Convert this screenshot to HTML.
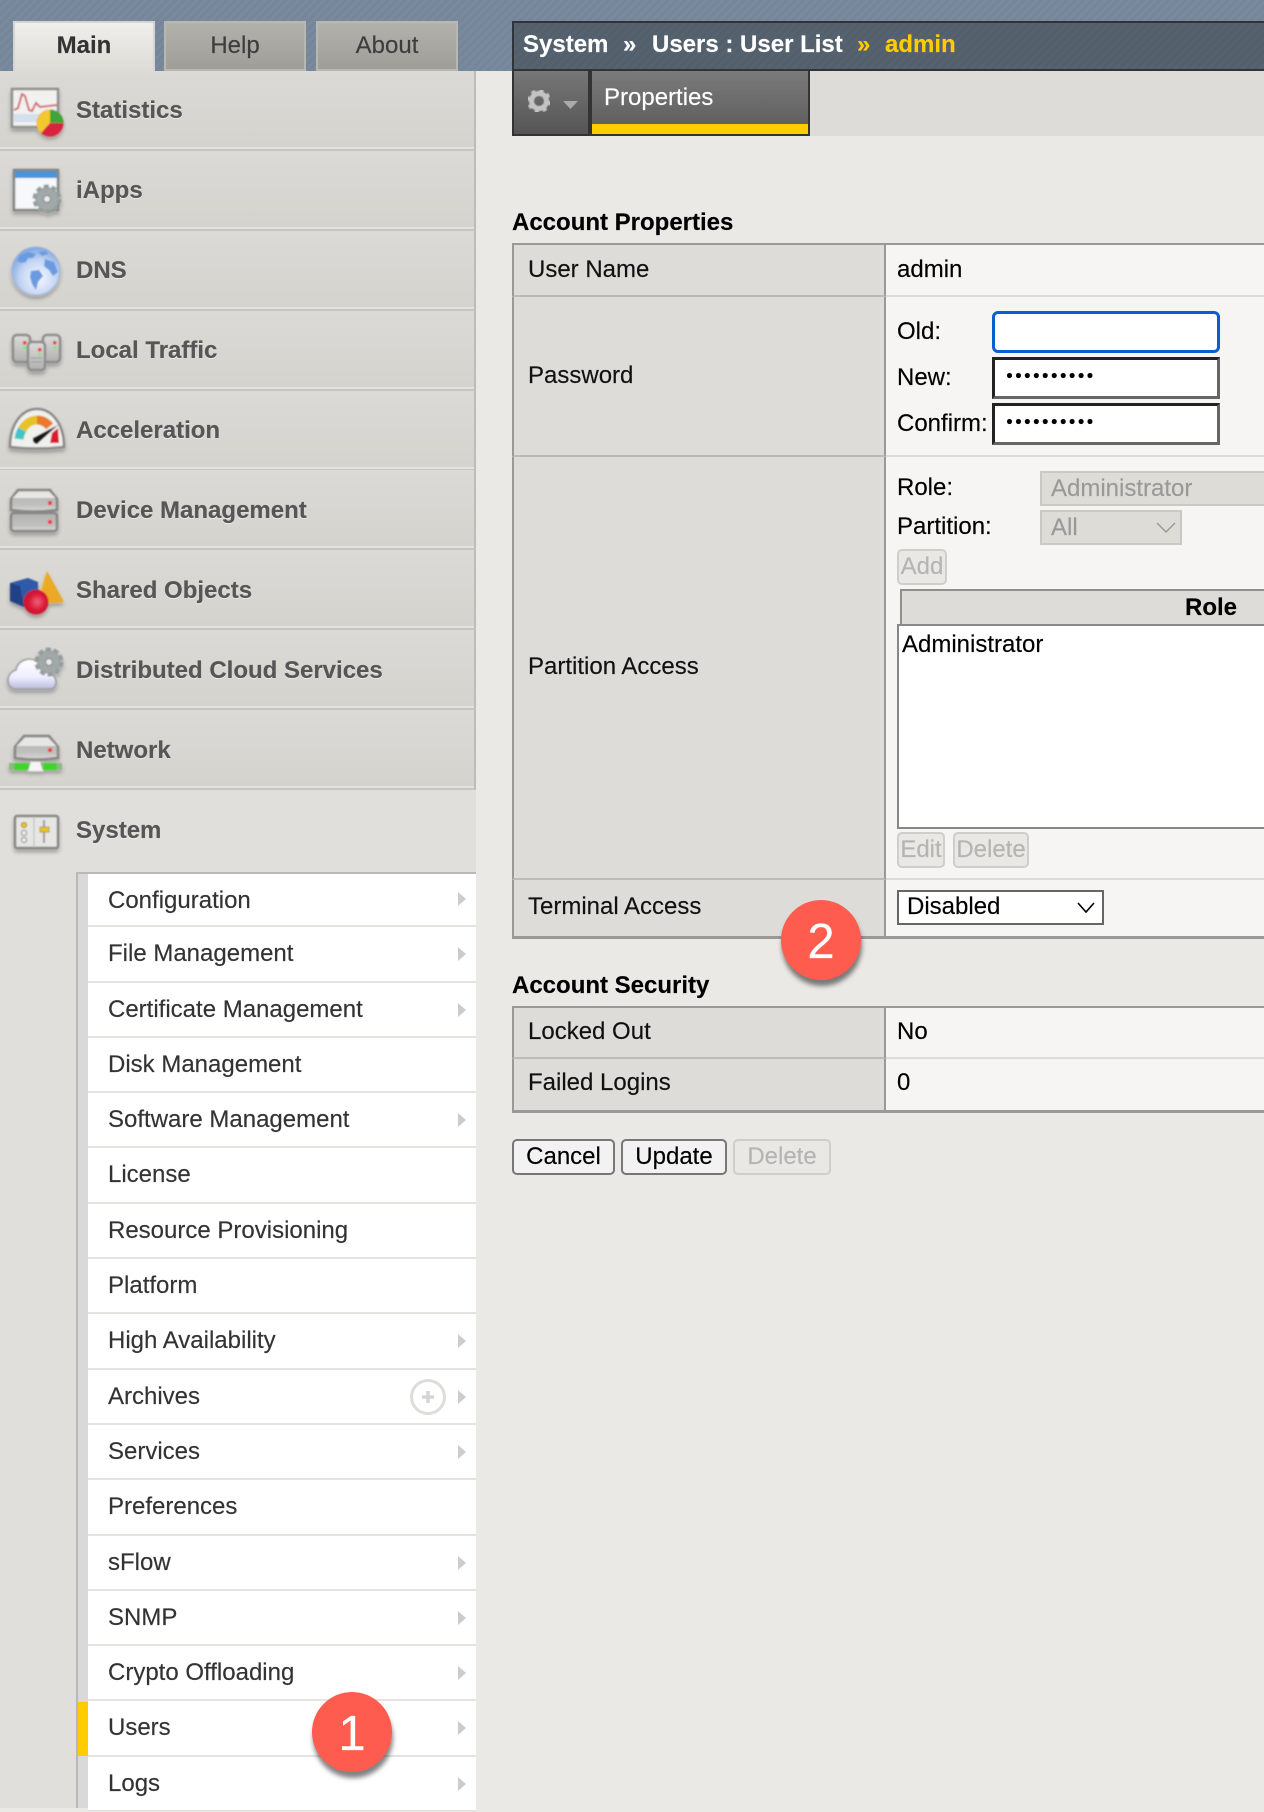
<!DOCTYPE html>
<html lang="en">
<head>
<meta charset="utf-8">
<title>System : Users : User List : admin</title>
<style>
html,body{margin:0;padding:0}
body{position:relative;width:1264px;height:1808px;overflow:hidden;background:#eae9e5;font-family:"Liberation Sans",Arial,sans-serif;font-size:24px;color:#000;-webkit-text-stroke:.15px currentColor}
div,span{position:absolute;box-sizing:border-box;white-space:nowrap}
.t{line-height:28px;height:28px}
#top{left:0;top:0;width:1264px;height:71px;background:repeating-linear-gradient(135deg,#7a899c 0,#7a899c 3px,#76869a 3px,#76869a 6px)}
.tab{top:21px;width:142px;height:50px;text-align:center;line-height:45px;border:2px solid #b8b8b3;background:linear-gradient(#b2b1ac,#9f9e99);color:#3d3d3d}
#main{background:linear-gradient(#f0efeb,#dcdbd6);color:#333;font-weight:bold;border-color:#d4d4d0;border-bottom:0}
#side{left:0;top:71px;width:476px;height:1737px;background:#e0dfdb}
.nav{left:0;width:476px;height:80px;background:linear-gradient(#dbdad6,#d4d3ce);border-bottom:2px solid #c6c5c2;border-right:2px solid #bdbcb9;box-shadow:inset 0 -2px 0 #e3e2de}
.lbl{left:76px;height:28px;line-height:28px;font-weight:bold;color:#565656;text-shadow:0 1px 0 #eee}
#subl{left:76px;top:872px;width:12px;height:936px;background:#d9d9d9;border-left:2px solid #b8b8b8}
.row{left:88px;width:388px;background:#fff;border-bottom:2px solid #e4e3e0;line-height:53px;padding-left:20px;color:#333}
.row i{position:absolute;left:370px;top:20px;width:0;height:0;border-left:8px solid #ccc;border-top:7px solid transparent;border-bottom:7px solid transparent}
#crumb{left:512px;top:21px;width:752px;height:50px;border:2px solid #2f3439;border-right:0;background:repeating-linear-gradient(135deg,#56636f 0,#56636f 3px,#525f6c 3px,#525f6c 6px);color:#fff;font-weight:bold;line-height:44px}
#bar{left:512px;top:71px;width:752px;height:65px;background:#dedcd8}
#gtab{left:512px;top:71px;width:78px;height:65px;background:linear-gradient(#777,#555);border:2px solid #333;border-top:0}
#ptab{left:590px;top:71px;width:220px;height:65px;background:linear-gradient(#7b7b7b,#5b5b5b);border:2px solid #333;border-top:0;color:#fff;line-height:54px;padding-left:12px}
#ptab u{position:absolute;left:0;bottom:0;width:216px;height:10px;background:#fc0;display:block}
.h{left:512px;font-weight:bold;height:28px;line-height:28px}
.lc{left:512px;width:374px;background:#dedcd8;border-left:2px solid #999;border-right:2px solid #999;border-bottom:2px solid #bcbbb7;padding-left:14px;color:#111}
.rc{left:886px;width:378px;background:#f6f5f3;border-bottom:2px solid #dcdbd8;padding-left:11px}
.in{left:992px;width:228px;height:42px;background:#fff;font-size:16px}
.pw{border:3px solid;border-color:#222 #666 #666 #222;font-family:"DejaVu Sans",sans-serif;font-size:14px;letter-spacing:0;line-height:35px;padding-left:10px;font-weight:bold}
.dis{background:#dedcd6;border:2px solid #c9c8c3;color:#999;line-height:31px;padding-left:9px}
.btn{height:36px;border:2px solid #777;border-radius:5px;background:#f2f2f2;text-align:center;line-height:31px}
.off{border-color:#cfcecb;background:#e9e8e5;color:#b4b4b2}
.badge{width:80px;height:80px;border-radius:50%;background:#fd5c4e;color:#fff;text-align:center;font-size:49px;line-height:85px;box-shadow:1px 6px 5px rgba(30,30,30,.55)}
svg{position:absolute;left:0;top:0}
</style>
</head>
<body>
<div id="top"></div>
<div class="tab" id="main" style="left:13px">Main</div>
<div class="tab" style="left:164px">Help</div>
<div class="tab" style="left:316px">About</div>

<div id="side"></div>
<div class="nav" style="top:71px;height:80px"></div>
<div class="nav" style="top:151px"></div>
<div class="nav" style="top:231px"></div>
<div class="nav" style="top:311px"></div>
<div class="nav" style="top:391px"></div>
<div class="nav" style="top:470px"></div>
<div class="nav" style="top:550px"></div>
<div class="nav" style="top:630px"></div>
<div class="nav" style="top:710px"></div>

<div class="lbl" style="top:97px">Statistics</div>
<div class="lbl" style="top:177px">iApps</div>
<div class="lbl" style="top:257px">DNS</div>
<div class="lbl" style="top:337px">Local Traffic</div>
<div class="lbl" style="top:417px">Acceleration</div>
<div class="lbl" style="top:497px">Device Management</div>
<div class="lbl" style="top:577px">Shared Objects</div>
<div class="lbl" style="top:657px">Distributed Cloud Services</div>
<div class="lbl" style="top:737px">Network</div>
<div class="lbl" style="top:817px">System</div>

<div id="subl"></div>
<div class="row" style="top:874px;height:53px">Configuration<i style="top:18px"></i></div>
<div class="row" style="top:927px;height:56px">File Management<i></i></div>
<div class="row" style="top:983px;height:55px">Certificate Management<i></i></div>
<div class="row" style="top:1038px;height:55px">Disk Management</div>
<div class="row" style="top:1093px;height:55px">Software Management<i></i></div>
<div class="row" style="top:1148px;height:56px">License</div>
<div class="row" style="top:1204px;height:55px">Resource Provisioning</div>
<div class="row" style="top:1259px;height:55px">Platform</div>
<div class="row" style="top:1314px;height:56px">High Availability<i></i></div>
<div class="row" style="top:1370px;height:55px">Archives<i></i></div>
<div class="row" style="top:1425px;height:55px">Services<i></i></div>
<div class="row" style="top:1480px;height:56px">Preferences</div>
<div class="row" style="top:1536px;height:55px">sFlow<i></i></div>
<div class="row" style="top:1591px;height:55px">SNMP<i></i></div>
<div class="row" style="top:1646px;height:55px">Crypto Offloading<i></i></div>
<div class="row" style="top:1701px;height:56px">Users<i></i></div>
<div class="row" style="top:1757px;height:55px">Logs<i></i></div>
<div style="left:76px;top:872px;width:400px;height:2px;background:#b8b8b8"></div>
<div style="left:78px;top:1702px;width:10px;height:54px;background:#fc0"></div>

<div id="crumb">
<span style="left:9px;top:0">System</span>
<span style="left:109px;top:0">»</span>
<span style="left:138px;top:0">Users : User List</span>
<span style="left:343px;top:0;color:#fc0">»</span>
<span style="left:371px;top:0;color:#fc0">admin</span>
</div>
<div id="bar"></div>
<div id="gtab"></div>
<div id="ptab">Properties<u></u></div>

<div class="h" style="top:209px">Account Properties</div>
<div style="left:512px;top:243px;width:752px;height:2px;background:#999"></div>
<div class="lc" style="top:245px;height:52px;line-height:49px">User Name</div>
<div class="rc" style="top:245px;height:52px;line-height:49px">admin</div>
<div class="lc" style="top:297px;height:160px;line-height:157px">Password</div>
<div class="rc" style="top:297px;height:160px"></div>
<div class="lc" style="top:457px;height:423px;line-height:420px">Partition Access</div>
<div class="rc" style="top:457px;height:423px"></div>
<div class="lc" style="top:880px;height:57px;line-height:54px;border-bottom:0">Terminal Access</div>
<div class="rc" style="top:880px;height:57px;border-bottom:0"></div>
<div style="left:512px;top:936px;width:752px;height:3px;background:#999"></div>

<div class="t" style="left:897px;top:318px">Old:</div>
<div class="t" style="left:897px;top:364px">New:</div>
<div class="t" style="left:897px;top:410px">Confirm:</div>
<div class="in" style="top:311px;border:3px solid #0a5fd0;border-radius:6px"></div>
<div class="in pw" style="top:357px">••••••••••</div>
<div class="in pw" style="top:403px">••••••••••</div>

<div class="t" style="left:897px;top:474px">Role:</div>
<div class="t" style="left:897px;top:513px">Partition:</div>
<div class="dis" style="left:1040px;top:471px;width:224px;height:35px;border-right:0">Administrator</div>
<div class="dis" style="left:1040px;top:510px;width:142px;height:35px">All</div>
<div class="btn off" style="left:897px;top:549px;width:50px">Add</div>
<div style="left:900px;top:589px;width:364px;height:36px;background:#dedcd8;border-top:2px solid #8f8f8f;border-left:2px solid #8f8f8f"></div>
<div class="t" style="left:1185px;top:594px;font-weight:bold">Role</div>
<div style="left:897px;top:624px;width:367px;height:205px;background:#fff;border:2px solid #888;border-right:0"></div>
<div class="t" style="left:902px;top:631px">Administrator</div>
<div class="btn off" style="left:897px;top:832px;width:48px">Edit</div>
<div class="btn off" style="left:953px;top:832px;width:76px">Delete</div>
<div style="left:897px;top:890px;width:207px;height:35px;background:#fff;border:2px solid #666;line-height:30px;padding-left:8px">Disabled</div>

<div class="h" style="top:972px">Account Security</div>
<div style="left:512px;top:1006px;width:752px;height:2px;background:#999"></div>
<div class="lc" style="top:1008px;height:51px;line-height:48px">Locked Out</div>
<div class="rc" style="top:1008px;height:51px;line-height:48px">No</div>
<div class="lc" style="top:1059px;height:52px;line-height:48px;border-bottom:0">Failed Logins</div>
<div class="rc" style="top:1059px;height:52px;line-height:48px;border-bottom:0">0</div>
<div style="left:512px;top:1110px;width:752px;height:3px;background:#999"></div>

<div class="btn" style="left:512px;top:1139px;width:103px">Cancel</div>
<div class="btn" style="left:621px;top:1139px;width:106px">Update</div>
<div class="btn off" style="left:733px;top:1139px;width:98px">Delete</div>

<svg width="1264" height="1808" viewBox="0 0 1264 1808" xmlns="http://www.w3.org/2000/svg">
<defs>
<filter id="s" x="-5%" y="-5%" width="110%" height="110%"><feGaussianBlur stdDeviation=".6"/></filter>
<filter id="ic" filterUnits="userSpaceOnUse" x="0" y="60" width="80" height="810">
<feGaussianBlur in="SourceGraphic" stdDeviation=".7" result="b"/>
<feGaussianBlur in="SourceAlpha" stdDeviation="2"/><feOffset dy="3"/>
<feComponentTransfer result="sd"><feFuncA type="linear" slope=".3"/></feComponentTransfer>
<feMerge><feMergeNode in="sd"/><feMergeNode in="b"/></feMerge>
</filter>
<linearGradient id="srv" x1="0" y1="0" x2="0" y2="1"><stop offset="0" stop-color="#dcdcda"/><stop offset="1" stop-color="#b0b0ae"/></linearGradient>
<linearGradient id="fr" x1="0" y1="0" x2="0" y2="1"><stop offset="0" stop-color="#b0b0ad"/><stop offset=".7" stop-color="#c0c0bd"/><stop offset="1" stop-color="#dadad7"/></linearGradient>
<radialGradient id="gl" cx=".55" cy=".65" r=".62"><stop offset="0" stop-color="#f6f8fe"/><stop offset=".6" stop-color="#c5d6f3"/><stop offset="1" stop-color="#85a8e2"/></radialGradient>
<radialGradient id="ball" cx=".55" cy=".5" r=".55"><stop offset="0" stop-color="#ee5f7c"/><stop offset=".6" stop-color="#d91a38"/><stop offset="1" stop-color="#c9102a"/></radialGradient>
<linearGradient id="cld" x1="0" y1="0" x2="0" y2="1"><stop offset="0" stop-color="#fff"/><stop offset=".6" stop-color="#eef"/><stop offset="1" stop-color="#b9bbdc"/></linearGradient>
</defs>
<g filter="url(#ic)">
<!-- Statistics -->
<rect x="12" y="89" width="46" height="38" fill="#f1f1f0" stroke="#8f8f8d" stroke-width="2.5"/>
<rect x="14" y="114" width="42" height="8" fill="#d3e0ee"/>
<path d="M14 110 L18 108 L22 94 L25 96 L29 110 L32 111 L36 103 L40 107 L57 105" fill="none" stroke="#d36a70" stroke-width="2"/>
<circle cx="50" cy="123" r="13.5" fill="#d9233c"/>
<path d="M50 123 L50 109.500 A13.500 13.500 0 0 1 63.500 123 Z" fill="#3fa537"/>
<path d="M50 123 L50 109.500 A13.500 13.500 0 0 0 41 133 Z" fill="#f1c92d"/>
<!-- iApps -->
<rect x="14" y="170" width="44" height="40" fill="#f7f8fb" stroke="#858585" stroke-width="2.500"/>
<rect x="15" y="171" width="42" height="7" fill="#4e93d9"/>
<circle cx="47" cy="199" r="12" fill="#a1a8a8"/>
<circle cx="47" cy="199" r="12.500" fill="none" stroke="#959c9c" stroke-width="4" stroke-dasharray="5 2.900"/>
<circle cx="47" cy="199" r="3.500" fill="#eaeaea" stroke="#808080" stroke-width="1"/>
<!-- DNS -->
<circle cx="36" cy="271" r="24" fill="url(#gl)" stroke="#9fb5d6" stroke-width="1"/>
<path d="M20 255 L28 252 L36 254 L33 258 L28 258 L26 262 L21 263 L17 261 Z M31 271 L39 270 L43 276 L38 282 L36 290 L32 284 L30 277 Z M45 259 L54 262 L58 272 L53 276 L49 270 L44 266 Z M38 252 L46 251 L48 254 L42 256 Z" fill="#6a9be0"/>
<!-- Local Traffic -->
<g fill="url(#srv)" stroke="#8d8d8b" stroke-width="2.500">
<rect x="13" y="335" width="17" height="27" rx="4"/>
<rect x="43" y="335" width="17" height="27" rx="4"/>
<rect x="28" y="342" width="17" height="28" rx="4"/>
</g>
<g fill="#f0384a"><rect x="23" y="341" width="3.500" height="3.500"/><rect x="38" y="348" width="3.500" height="3.500"/><rect x="53" y="341" width="3.500" height="3.500"/></g>
<g fill="#8fe27a"><rect x="23" y="346" width="3.500" height="3.500"/><rect x="38" y="353" width="3.500" height="3.500"/><rect x="53" y="346" width="3.500" height="3.500"/></g>
<path d="M31 358 H42 M31 362 H42" stroke="#999" stroke-width="1"/>
<!-- Acceleration -->
<path d="M10 447 C10 424 22 409 37 409 C52 409 64 424 64 447 Q37 450 10 447 Z" fill="#f0f0ed" stroke="#8a8a88" stroke-width="2.500"/>
<path d="M19 439 A18 22 0 0 1 22.300 429.400" fill="none" stroke="#3fc6c6" stroke-width="9"/>
<path d="M22.300 429.400 A18 22 0 0 1 37 420" fill="none" stroke="#e6c320" stroke-width="9"/>
<path d="M37 420 A18 22 0 0 1 49.700 426.400" fill="none" stroke="#ea7a2a" stroke-width="9"/>
<path d="M52 433 L58 428 L59 443 L50 443 Z" fill="#d81f2f"/>
<path d="M33 438 L58 425 L37 444 Q32 443 33 438 Z" fill="#151515"/>
<!-- Device Management -->
<path d="M11 510 V499 L18 490 H50 L57 499 V510 Q34 513 11 510 Z" fill="url(#fr)" stroke="#878785" stroke-width="2.500"/>
<path d="M12.500 498 L19 491.500 H49 L55.500 498 Z" fill="#e6e6e4"/>
<rect x="11" y="513" width="46" height="18" rx="3" fill="url(#fr)" stroke="#878785" stroke-width="2.500"/>
<rect x="48" y="501" width="4" height="4" fill="#f0384a"/>
<rect x="48" y="520" width="4" height="4" fill="#f0384a"/>
<!-- Shared Objects -->
<path d="M47 571 L64 602 L36 604 Z" fill="#eba928"/>
<path d="M47 571 L38 604 L36 604 Z" fill="#f5c447"/>
<path d="M10 583 L28 578 L38 582 L38 603 L24 607 L10 601 Z" fill="#2f5aa8"/>
<path d="M10 583 L20 586 L24 607 L10 601 Z" fill="#223f84"/>
<circle cx="36" cy="602" r="12.500" fill="url(#ball)"/>
<!-- Distributed Cloud -->
<path d="M16 689 C6 689 5 673 16 670 C18 660 30 656 37 662 C44 664 50 668 50 674 C58 676 58 689 50 689 Z" fill="url(#cld)" stroke="#9a9aa0" stroke-width="1.500"/>
<circle cx="49" cy="662" r="12" fill="#a1a8a8"/>
<circle cx="49" cy="662" r="12.500" fill="none" stroke="#959c9c" stroke-width="4" stroke-dasharray="5 2.900"/>
<circle cx="49" cy="662" r="3.500" fill="#eaeaea" stroke="#808080" stroke-width="1"/>
<!-- Network -->
<path d="M15 758 V747 L24 736 H49 L58 747 V758 Q36 761 15 758 Z" fill="url(#fr)" stroke="#878785" stroke-width="2.500"/>
<path d="M16.500 746 L25 737.500 H48 L56.500 746 Z" fill="#e6e6e4"/>
<rect x="48" y="748" width="4" height="4" fill="#f0384a"/>
<rect x="9" y="763" width="53" height="7" fill="#8fb884"/>
<rect x="14" y="763" width="15" height="7" fill="#3fd42b"/>
<rect x="43" y="763" width="14" height="7" fill="#3fd42b"/>
<path d="M28 771 L31 762 H40 L43 771 Z" fill="#f5f5f5"/>
<!-- System -->
<rect x="15" y="816" width="43" height="32" rx="2" fill="#e6e6e3" stroke="#858583" stroke-width="2.500"/>
<path d="M34 817 V847" stroke="#c9c9c6" stroke-width="1.500"/>
<circle cx="24" cy="825" r="2.600" fill="#e8c62a" stroke="#a68d1d" stroke-width="1"/>
<circle cx="24" cy="833" r="2.600" fill="#eee" stroke="#888" stroke-width="1"/>
<circle cx="24" cy="840" r="2.600" fill="#eee" stroke="#888" stroke-width="1"/>
<path d="M44 820 V843" stroke="#9a9a98" stroke-width="2"/>
<rect x="40" y="827" width="9" height="5" fill="#e8c62a" stroke="#a68d1d" stroke-width=".8"/>
</g>
<!-- Archives plus -->
<circle cx="428" cy="1397" r="16.500" fill="none" stroke="#dedddb" stroke-width="3"/>
<path d="M428 1391 V1403 M422 1397 H434" stroke="#d5d5d3" stroke-width="3.500"/>
<!-- toolbar gear -->
<g filter="url(#s)">
<circle cx="539" cy="101" r="7.500" fill="none" stroke="#c4c4c4" stroke-width="5"/>
<circle cx="539" cy="101" r="10" fill="none" stroke="#c4c4c4" stroke-width="4" stroke-dasharray="4 3.850"/>
</g>
<path d="M563 101 H578 L570.500 109 Z" fill="#aaa"/>
<!-- select chevrons -->
<path d="M1157 523 L1166 532 L1175 523" fill="none" stroke="#999" stroke-width="1.500"/>
<path d="M1078 903 L1086 912 L1094 903" fill="none" stroke="#000" stroke-width="1.600"/>
</svg>

<div class="badge" style="left:781px;top:900px">2</div>
<div class="badge" style="left:312px;top:1692px">1</div>
</body>
</html>
